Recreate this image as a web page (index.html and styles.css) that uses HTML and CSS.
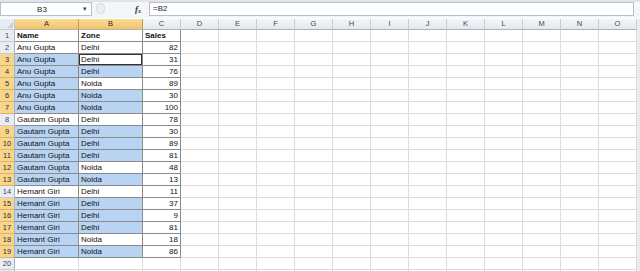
FILE: index.html
```html
<!DOCTYPE html>
<html lang="en">
<head>
    <meta charset="UTF-8">
    <title>Sales sheet</title>
    <link rel="stylesheet" href="styles.css">
</head>
<body>
    <div class="formula-bar">
        <div class="name-box">
            <span class="name-value">B3</span>
            <span class="name-arrow">&#9662;</span>
        </div>
        <div class="bar-knob"></div>
        <div class="fx">f<sub>x</sub></div>
        <div class="formula-input">=B2</div>
    </div>

    <div class="sheet" id="sheet"></div>

    <script>
        let data = [
            ['Name', 'Zone', 'Sales'],
            ['Anu Gupta', 'Delhi', 82],
            ['Anu Gupta', 'Delhi', 31],
            ['Anu Gupta', 'Delhi', 76],
            ['Anu Gupta', 'Noida', 89],
            ['Anu Gupta', 'Noida', 30],
            ['Anu Gupta', 'Noida', 100],
            ['Gautam Gupta', 'Delhi', 78],
            ['Gautam Gupta', 'Delhi', 30],
            ['Gautam Gupta', 'Delhi', 89],
            ['Gautam Gupta', 'Delhi', 81],
            ['Gautam Gupta', 'Noida', 48],
            ['Gautam Gupta', 'Noida', 13],
            ['Hemant Giri', 'Delhi', 11],
            ['Hemant Giri', 'Delhi', 37],
            ['Hemant Giri', 'Delhi', 9],
            ['Hemant Giri', 'Delhi', 81],
            ['Hemant Giri', 'Noida', 18],
            ['Hemant Giri', 'Noida', 86]
        ];
        // selected cells, row numbers
        let selA = [3, 4, 5, 6, 7, 9, 10, 11, 12, 13, 15, 16, 17, 18, 19];
        let selB = [4, 6, 7, 9, 10, 11, 13, 15, 16, 17, 19];
        let letters = 'ABCDEFGHIJKLMNO';
        let sheet = document.getElementById('sheet');

        function cell(cls, text) {
            let div = document.createElement('div');
            div.className = cls;
            if (text !== undefined) div.textContent = text;
            sheet.appendChild(div);
        }

        cell('corner');
        for (let i = 0; i < letters.length; i++) {
            cell(i < 2 ? 'col-head picked' : 'col-head', letters[i]);
        }
        cell('edge');

        // row 21 only peeks in at the bottom, so it gets no number
        for (let r = 1; r <= 21; r++) {
            let row = data[r - 1];
            let picked = selA.includes(r) || selB.includes(r);
            cell(picked ? 'row-head picked' : 'row-head', r < 21 ? r : undefined);
            for (let c = 0; c < letters.length; c++) {
                let cls = 'cell';
                let text;
                if (row && c < 3) {
                    cls += ' boxed';
                    text = row[c];
                    if (r === 1) cls += ' bold';
                    if (c === 2 && r > 1) cls += ' num';
                    if (c === 0 && selA.includes(r)) cls += ' sel';
                    if (c === 1 && selB.includes(r)) cls += ' sel';
                    if (c === 1 && r === 3) cls += ' active';
                }
                cell(cls, text);
            }
            cell('edge');
        }
    </script>
</body>
</html>
```

FILE: styles.css
```css
body {
    margin: 0;
    width: 640px;
    height: 271px;
    overflow: hidden;
    background: #fff;
    font-family: "Liberation Sans", Arial, sans-serif;
}
.formula-bar {
    display: flex;
    height: 19px;
    padding-top: 2px;
    box-sizing: border-box;
    background: linear-gradient(#dfe4ea 0, #dfe4ea 2px, #f4f6f9 2px);
    border-bottom: 1px solid #fff;
}
.name-box {
    width: 92px;
    height: 14px;
    box-sizing: border-box;
    display: flex;
    align-items: center;
    background: #fff;
    border: 1px solid #b7bfc9;
    font-size: 8px;
    color: #222;
}
.name-value {
    flex: 1;
    text-align: center;
}
.name-arrow {
    width: 8px;
    font-size: 7px;
    color: #444;
}
.bar-knob {
    width: 9px;
    height: 11px;
    margin: 1px 0 0 4px;
    border-radius: 6px;
    background: #eceef1;
    border: 1px solid #d6dae0;
    box-sizing: border-box;
}
.fx {
    width: 14px;
    margin-left: 30px;
    font-family: "Liberation Serif", serif;
    font-style: italic;
    font-weight: bold;
    font-size: 9px;
    line-height: 14px;
    color: #333;
}
.fx sub {
    font-size: 6px;
    vertical-align: -1px;
}
.formula-input {
    flex: 1;
    height: 14px;
    margin-right: 6px;
    padding-left: 3px;
    box-sizing: border-box;
    background: #fff;
    border: 1px solid #b7bfc9;
    font-size: 8px;
    line-height: 12px;
    color: #222;
}
.sheet {
    display: grid;
    grid-template-columns: 15px 64px 64px 38px repeat(12, 38px) 3px;
    grid-template-rows: 11px;
    grid-auto-rows: 12px;
    font-size: 8px;
}
.sheet > div {
    box-sizing: border-box;
    white-space: nowrap;
    overflow: hidden;
}
.corner {
    background: #e9edf2;
    border-right: 1px solid #c5ccd6;
    border-bottom: 1px solid #c5ccd6;
    position: relative;
}
.corner::after {
    content: "";
    position: absolute;
    right: 1px;
    bottom: 1px;
    border-left: 6px solid transparent;
    border-bottom: 6px solid #c8ced6;
}
.col-head {
    background: linear-gradient(#f3f5f8, #e3e8ee);
    border-right: 1px solid #c5ccd6;
    border-bottom: 1px solid #a9b3c0;
    text-align: center;
    line-height: 10px;
    font-size: 7.5px;
    color: #3e4a5a;
}
.row-head {
    background: #e9edf2;
    border-right: 1px solid #a9b3c0;
    border-bottom: 1px solid #c5ccd6;
    text-align: center;
    line-height: 11px;
    font-size: 7.5px;
    color: #3e4a5a;
}
.col-head.picked {
    background: linear-gradient(#f9dc9c, #f2c460);
    border-right-color: #c2a15a;
    color: #2d2d2d;
}
.row-head.picked {
    background: #f7d68c;
    border-bottom-color: #dbb565;
    color: #2d2d2d;
}
.edge {
    background: #e9edf2;
}
.cell {
    border-right: 1px solid #dadcdd;
    border-bottom: 1px solid #dadcdd;
    padding: 0 2px;
    line-height: 11px;
    color: #111;
}
.cell.boxed {
    border-color: #8a8a8a;
}
.cell.bold {
    font-weight: bold;
}
.cell.num {
    text-align: right;
}
.cell.sel {
    background: #b8d4f2;
}
.cell.active {
    background: #fff;
    box-shadow: inset 0 0 0 1px #333;
}
```
